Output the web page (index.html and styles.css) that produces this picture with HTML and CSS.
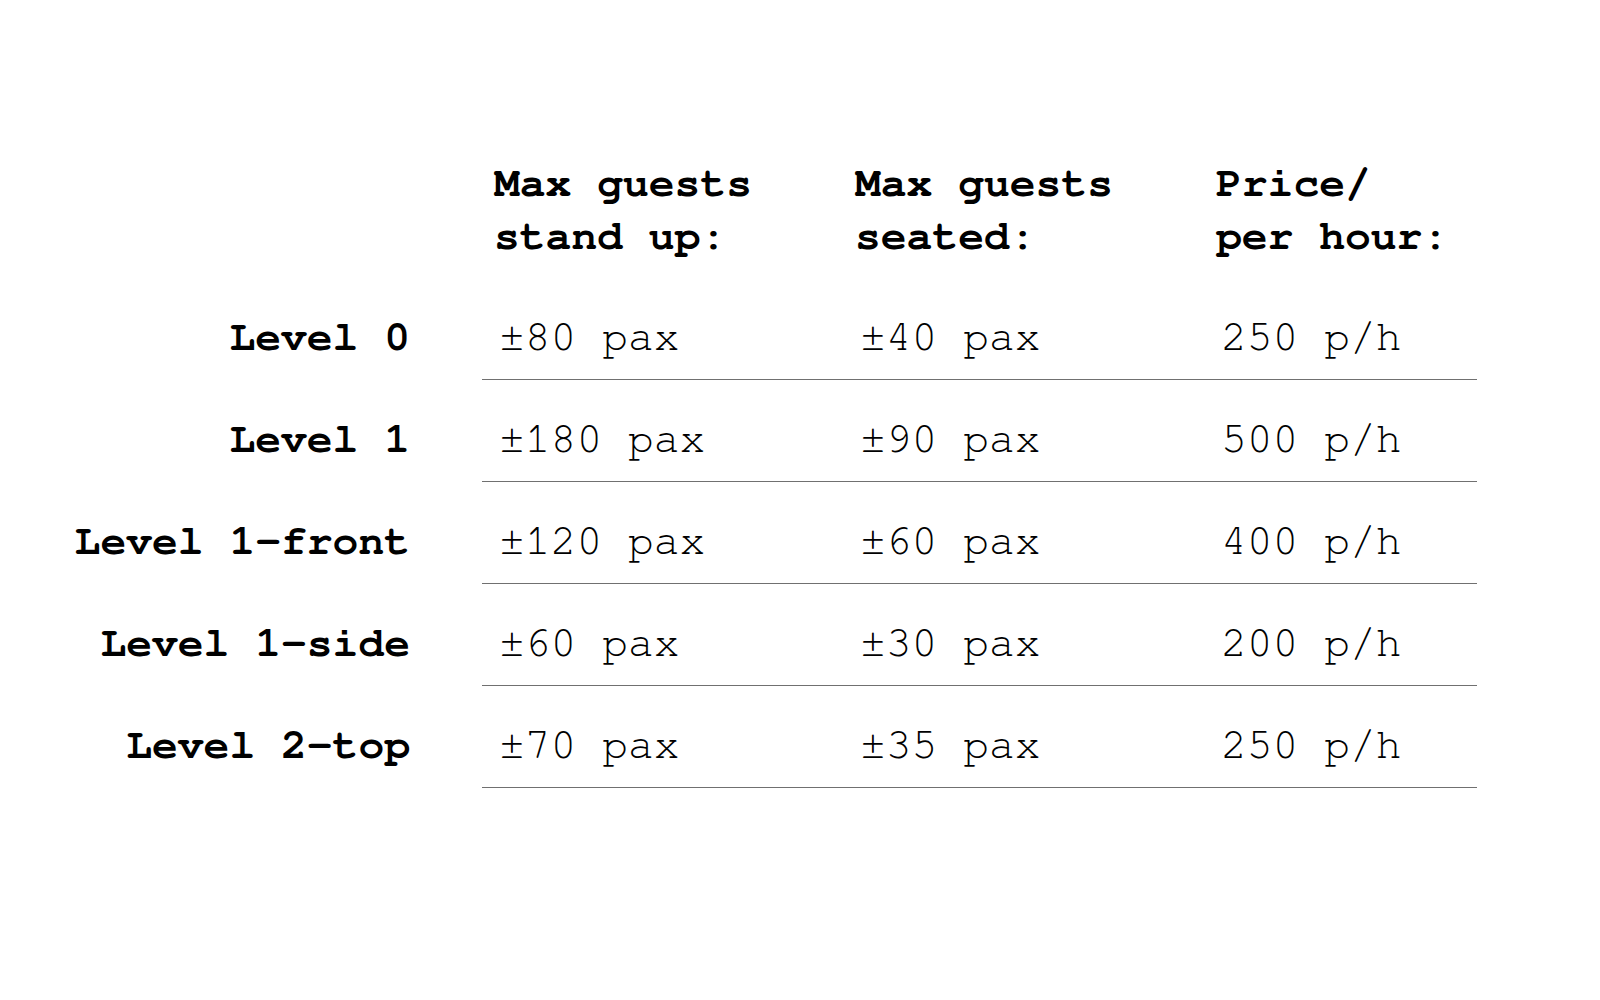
FILE: index.html
```html
<!DOCTYPE html>
<html lang="en">
<head>
<meta charset="utf-8">
<title>Levels</title>
<link rel="stylesheet" href="styles.css">
</head>
<body>
<div class="wrap">
  <table class="levels">
    <colgroup>
      <col class="c-label">
      <col class="c-stand">
      <col class="c-seat">
      <col class="c-price">
    </colgroup>
    <thead>
      <tr>
        <th class="blank"></th>
        <th class="head">Max guests<br>stand up:</th>
        <th class="head">Max guests<br>seated:</th>
        <th class="head">Price/<br>per hour:</th>
      </tr>
    </thead>
    <tbody>
      <tr><th class="label">Level 0</th><td>±80 pax</td><td>±40 pax</td><td>250 p/h</td></tr>
      <tr><th class="label">Level 1</th><td>±180 pax</td><td>±90 pax</td><td>500 p/h</td></tr>
      <tr><th class="label">Level 1-front</th><td>±120 pax</td><td>±60 pax</td><td>400 p/h</td></tr>
      <tr><th class="label">Level 1-side</th><td>±60 pax</td><td>±30 pax</td><td>200 p/h</td></tr>
      <tr><th class="label">Level 2-top</th><td>±70 pax</td><td>±35 pax</td><td>250 p/h</td></tr>
    </tbody>
  </table>
</div>
</body>
</html>
```

FILE: styles.css
```css
html, body {
  margin: 0;
  padding: 0;
  background: #ffffff;
}

body {
  font-family: "Nimbus Mono PS", "Nimbus Mono L", "FreeMono", "Courier New", "Courier", "Liberation Mono", monospace;
  font-size: 43px;
  line-height: 53px;
  color: #000;
}

.wrap {
  padding-top: 157px;
}

.levels {
  border-collapse: collapse;
  table-layout: fixed;
  width: 1477px;
}

.c-label { width: 482px; }
.c-stand { width: 361px; }
.c-seat { width: 361px; }
.c-price { width: 273px; }

.levels th,
.levels td {
  padding: 0;
  vertical-align: top;
  white-space: nowrap;
}

.levels .head {
  text-align: left;
  font-weight: bold;
  padding: 0 0 15px 12px;
}

.levels .label {
  text-align: right;
  font-weight: bold;
  padding: 33px 72px 15px 0;
}

.levels td {
  text-align: left;
  font-weight: normal;
  padding: 33px 0 15px 17px;
  border-bottom: 1px solid #707070;
}
```
